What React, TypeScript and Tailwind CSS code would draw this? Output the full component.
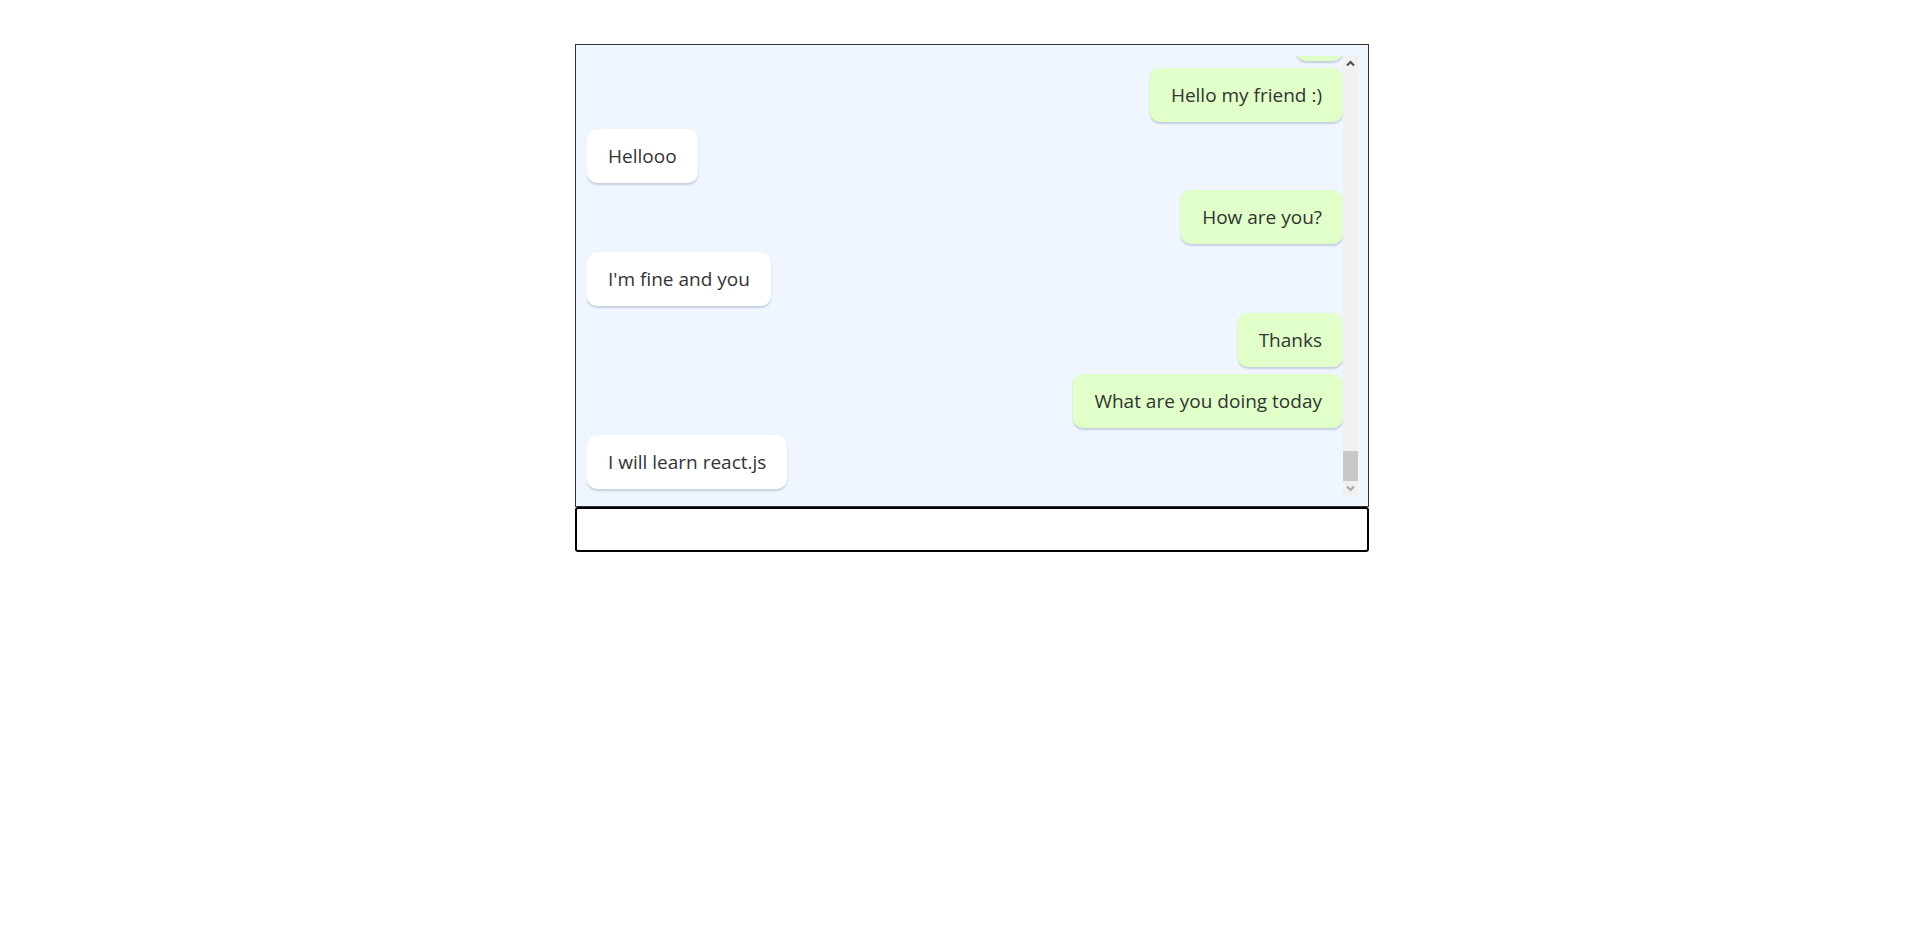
import { useLayoutEffect, useRef } from "react";

type Message = { text: string; mine: boolean };

const filler: Message[] = Array.from({ length: 90 }, (_, i) => ({
  text: i % 2 === 0 ? "Hi" : "Hello",
  mine: i % 2 === 1,
}));

const messages: Message[] = [
  ...filler,
  { text: "!", mine: true },
  { text: "Hello my friend :)", mine: true },
  { text: "Hellooo", mine: false },
  { text: "How are you?", mine: true },
  { text: "I'm fine and you", mine: false },
  { text: "Thanks", mine: true },
  { text: "What are you doing today", mine: true },
  { text: "I will learn react.js", mine: false },
];

function Bubble({ message }: { message: Message }) {
  return (
    <div
      className={`mb-[7.2px] shrink-0 rounded-[10px] px-[21px] py-[15px] text-[19px] leading-[24px] text-[#333] shadow-[0_1.5px_2px_rgba(30,50,80,0.2)] ${
        message.mine ? "self-end bg-[#e1ffc8]" : "self-start bg-white"
      }`}
    >
      {message.text}
    </div>
  );
}

function Arrow({ up, color }: { up: boolean; color: string }) {
  return (
    <svg width="15" height="15" viewBox="0 0 15 15" className="shrink-0">
      <polyline
        points={up ? "4,9.5 7.5,6 11,9.5" : "4,5.5 7.5,9 11,5.5"}
        fill="none"
        stroke={color}
        strokeWidth="2.2"
      />
    </svg>
  );
}

export default function App() {
  const listRef = useRef<HTMLDivElement>(null);

  useLayoutEffect(() => {
    const el = listRef.current;
    if (el) el.scrollTop = el.scrollHeight;
  }, []);

  return (
    <div className="min-h-screen bg-white pt-[44px] pl-[575px] font-['Open_Sans',sans-serif]">
      <div className="w-[794px]">
        <div className="h-[463px] border border-[#333] bg-[#eff6ff] pt-[11px] pb-[10px] pl-[11px] pr-[10px]">
          <div className="relative h-[440px]">
            <div ref={listRef} className="flex h-full flex-col overflow-y-auto pr-[15px]">
              {messages.map((m, i) => (
                <Bubble key={i} message={m} />
              ))}
            </div>
            {/* scrollbar */}
            <div className="absolute top-0 right-0 flex h-full w-[15px] flex-col bg-[#f1f1f1]">
              <Arrow up color="#505050" />
              <div className="flex flex-1 flex-col justify-end">
                <div className="h-[30px] bg-[#c8c8c8]" />
              </div>
              <Arrow up={false} color="#a8a8a8" />
            </div>
          </div>
        </div>
        <input type="text" className="block h-[45px] w-full rounded-[3px] border-2 border-black bg-white px-2 outline-none" />
      </div>
    </div>
  );
}
